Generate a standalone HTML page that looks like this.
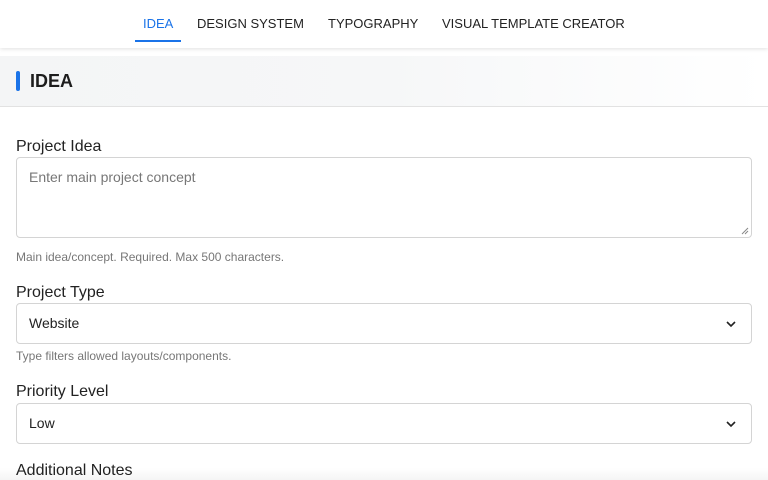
<!DOCTYPE html>
<html><head><style>
*{box-sizing:border-box;margin:0;padding:0}
body{width:768px;height:480px;overflow:hidden;background:#fff;font-family:"Liberation Sans",sans-serif;position:relative;color:#222}
.nav{height:48px;background:#fff;box-shadow:0 1px 4px rgba(0,0,0,.12);position:relative;z-index:2}
.nav a{position:absolute;top:16px;font-size:13px;color:#222}
.nav a.act{color:#1a73e8}
.ul{position:absolute;left:135px;top:40px;width:46px;height:2px;background:#1a73e8}
.hdr{position:absolute;top:56px;left:0;width:768px;height:51px;background:linear-gradient(90deg,#f4f5f6 0%,#f6f7f8 50%,#fff 100%);border-bottom:1px solid #e2e2e2}
.bar{position:absolute;left:16px;top:15px;width:4px;height:20px;background:#1a73e8;border-radius:2px}
.hdr h1{position:absolute;left:30px;top:15px;font-size:18px;font-weight:bold;color:#1d1d1d}
.lbl{position:absolute;left:16px;font-size:16px;color:#222;z-index:3}
.box{position:absolute;left:16px;width:736px;border:1px solid #d4d4d4;border-radius:4px;font-size:14px;padding-left:12px}
.help{position:absolute;left:16px;font-size:12px;color:#777}
.chev{position:absolute;right:15px;top:16px}
.shadow{position:absolute;left:0;top:468px;width:768px;height:12px;background:linear-gradient(#fff,#eee);z-index:1}
</style></head><body>
<div class="nav">
<a class="act" style="left:143px">IDEA</a>
<a style="left:197px">DESIGN SYSTEM</a>
<a style="left:328px">TYPOGRAPHY</a>
<a style="left:442px">VISUAL TEMPLATE CREATOR</a>
<div class="ul"></div>
</div>
<div class="hdr"><div class="bar"></div><h1>IDEA</h1></div>
<div class="lbl" style="top:138px">Project Idea</div>
<div class="box" style="top:157px;height:81px;padding-top:11px;color:#777">Enter main project concept
<svg style="position:absolute;right:2px;bottom:2px" width="8" height="8"><path d="M1 7L7 1M4 7L7 4" stroke="#888" stroke-width="1"/></svg></div>
<div class="help" style="top:250px">Main idea/concept. Required. Max 500 characters.</div>
<div class="lbl" style="top:284px">Project Type</div>
<div class="box" style="top:303px;height:41px;line-height:39px;color:#222">Website
<svg class="chev" width="10" height="8"><path d="M1 2L5 6L9 2" stroke="#222" stroke-width="1.6" fill="none"/></svg></div>
<div class="help" style="top:349px">Type filters allowed layouts/components.</div>
<div class="lbl" style="top:383px">Priority Level</div>
<div class="box" style="top:403px;height:41px;line-height:39px;color:#222">Low
<svg class="chev" width="10" height="8"><path d="M1 2L5 6L9 2" stroke="#222" stroke-width="1.6" fill="none"/></svg></div>
<div class="lbl" style="top:462px">Additional Notes</div>
<div class="shadow" style="opacity:.6"></div>
</body></html>
